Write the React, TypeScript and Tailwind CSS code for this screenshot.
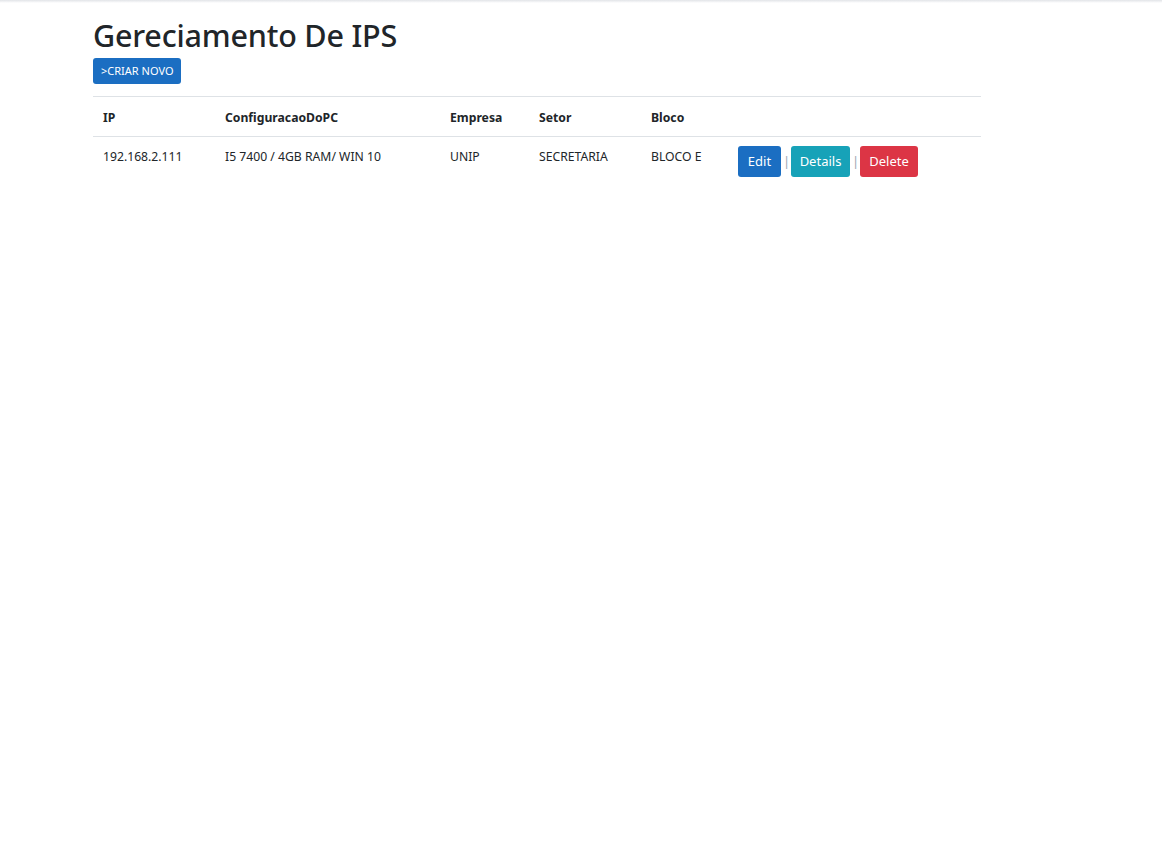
export default function App() {
  const cols = ["IP", "ConfiguracaoDoPC", "Empresa", "Setor", "Bloco", ""];
  const widths = ["w-[122px]", "w-[225px]", "w-[89px]", "w-[112px]", "w-[87px]", ""];
  const row = ["192.168.2.111", "I5 7400 / 4GB RAM/ WIN 10", "UNIP", "SECRETARIA", "BLOCO E"];

  return (
    <div
      className="min-h-screen bg-white text-[#212529]"
      style={{ fontFamily: '"Noto Sans", "Open Sans", sans-serif' }}
    >
      {/* navbar shadow strip */}
      <div className="h-[3px] bg-gradient-to-b from-[#e2e4e8] to-white" />
      <main className="ml-[93px] w-[888px] pt-[12px]">
        <h1 className="text-[30.5px] font-medium leading-[40px] tracking-[-0.2px]">Gereciamento De IPS</h1>
        <button className="mt-[3px] h-[26px] rounded-[3px] bg-[#1b6ec2] px-[8px] text-[11px] text-white">
          &gt;CRIAR NOVO
        </button>
        <table className="mt-[12px] w-full border-t border-[#dee2e6] text-[12.2px]">
          <thead>
            <tr className="border-b border-[#dee2e6]">
              {cols.map((c, i) => (
                <th key={i} className={`${widths[i]} px-[10px] pt-[12px] pb-[9px] text-left font-bold leading-[18px]`}>
                  {c}
                </th>
              ))}
            </tr>
          </thead>
          <tbody>
            <tr>
              {row.map((c, i) => (
                <td key={i} className="px-[10px] pt-[11px] pb-[10px] align-top leading-[18px]">
                  {c}
                </td>
              ))}
              <td className="px-[10px] pt-[9px] pb-[10px] align-top">
                <div className="flex items-center gap-[2px] text-[13px]">
                  <button className="h-[31px] w-[43px] rounded-[3px] bg-[#1b6ec2] text-white">Edit</button>
                  <span className="w-[6px] text-center text-[#9aa5b1]">|</span>
                  <button className="h-[31px] w-[59px] rounded-[3px] bg-[#17a2b8] text-white">Details</button>
                  <span className="w-[6px] text-center text-[#9aa5b1]">|</span>
                  <button className="h-[31px] w-[58px] rounded-[3px] bg-[#dc3545] text-white">Delete</button>
                </div>
              </td>
            </tr>
          </tbody>
        </table>
      </main>
    </div>
  );
}
